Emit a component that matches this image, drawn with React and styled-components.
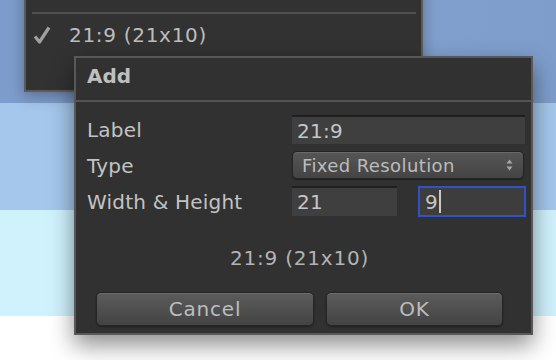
import React from 'react'
import styled, { createGlobalStyle } from 'styled-components'

const GlobalStyle = createGlobalStyle`
    html, body {
        margin : 0;
        padding : 0;
        background : #ffffff;
    }
    body {
        font-family : "DejaVu Sans", "Liberation Sans", sans-serif;
    }
`;

const Desktop = styled.div`
    position : relative;
    width : 556px;
    height : 360px;
    overflow : hidden;
    display : flex;
    flex-direction : column;
`;

const Band = styled.div`
    height : ${({h}) => h}px;
    flex : ${({fill}) => fill ? '1' : 'none'};
    background : ${({bg}) => bg};
`;

const Menu = styled.div`
    position : absolute;
    left : 24px;
    top : -20px;
    width : 399px;
    height : 112px;
    box-sizing : border-box;
    background : #323232;
    border : 2px solid #5b5b5b;
    box-shadow : 0 4px 14px rgba(0,0,0,0.3);
    display : flex;
    flex-direction : column;
`;

const MenuSeparator = styled.div`
    margin : 30px 5px 0 6px;
    height : 2px;
    background : #505050;
`;

const MenuItem = styled.div`
    display : flex;
    align-items : center;
    margin-top : 9px;
    height : 24px;
    padding-left : 7px;
    font-size : 20px;
    line-height : 24px;
    letter-spacing : 0.7px;
    color : #bdbdbd;
`;

const Check = styled.svg`
    width : 18px;
    height : 18px;
    margin-right : 18px;
    flex : none;
`;

const Dialog = styled.div`
    position : absolute;
    left : 74px;
    top : 56px;
    width : 459px;
    height : 279px;
    box-sizing : border-box;
    background : #313131;
    border : 2px solid #585858;
    box-shadow : 0 10px 22px rgba(0,0,0,0.45);
    display : flex;
    flex-direction : column;
`;

const TitleBar = styled.div`
    height : 44px;
    box-sizing : border-box;
    padding : 6px 0 0 11px;
    border-bottom : 2px solid #545454;
    font-size : 20px;
    line-height : 24px;
    font-weight : bold;
    color : #bfbfbf;
`;

const Form = styled.div`
    display : grid;
    grid-template-columns : 205px 1fr;
    row-gap : 7px;
    align-items : center;
    padding : 13px 6px 0 11px;
`;

const FieldLabel = styled.div`
    font-size : 20px;
    line-height : 24px;
    padding-top : 1px;
    letter-spacing : 0.2px;
    color : #c3c3c3;
`;

const TextField = styled.div`
    height : ${({h}) => h || 29}px;
    box-sizing : border-box;
    background : #3f3f3f;
    border-top : 2px solid #1f1f1f;
    padding-left : 5px;
    display : flex;
    align-items : center;
    font-size : 20px;
    letter-spacing : 0.3px;
    color : #c6c6c6;
`;

const FocusField = styled(TextField)`
    border : 2px solid #2f53c6;
    background : #3d3d3d;
    padding-left : 5px;
    margin-right : -1px;
`;

const Caret = styled.span`
    display : inline-block;
    width : 2px;
    height : 23px;
    margin-left : 1px;
    background : #c8c8c8;
`;

const Select = styled.div`
    height : 28px;
    box-sizing : border-box;
    border : 1px solid #242424;
    border-radius : 5px;
    background : linear-gradient(#565656, #444444);
    box-shadow : inset 0 1px 0 rgba(255,255,255,0.12), 0 1px 1px rgba(0,0,0,0.4);
    display : flex;
    align-items : center;
    justify-content : space-between;
    padding : 0 10px 0 9px;
    margin-right : 1px;
    font-size : 18px;
    letter-spacing : 0.4px;
    color : #bcbcbc;
`;

const Arrows = styled.svg`
    width : 7px;
    height : 12px;
`;

const PairRow = styled.div`
    display : grid;
    grid-template-columns : 105px 1fr;
    column-gap : 21px;
`;

const Preview = styled.div`
    margin-top : 29px;
    padding-right : 8px;
    text-align : center;
    font-size : 20px;
    line-height : 24px;
    letter-spacing : 0.8px;
    color : #b3b3b3;
`;

const ButtonRow = styled.div`
    display : flex;
    gap : 12px;
    margin-top : 22px;
    padding-left : 20px;
`;

const Button = styled.button`
    width : ${({w}) => w}px;
    height : 34px;
    box-sizing : border-box;
    border : 1px solid #262626;
    border-radius : 5px;
    background : linear-gradient(#5c5c5c, #434343);
    box-shadow : inset 0 1px 0 rgba(255,255,255,0.1), 0 1px 2px rgba(0,0,0,0.4);
    font-family : "DejaVu Sans", "Liberation Sans", sans-serif;
    font-size : 20px;
    letter-spacing : 0.8px;
    color : #bdbdbd;
    padding : 0;
`;

const App = () => {
    return (
        <>
            <GlobalStyle/>
            <Desktop>
                <Band h={103} bg="linear-gradient(90deg, #7d9ccb, #84a3cf 40%, #7e9dcb)"/>
                <Band h={107} bg="#a5c7eb"/>
                <Band h={106} bg="#d0f2fd"/>
                <Band fill bg="#ffffff"/>

                <Menu>
                    <MenuSeparator/>
                    <MenuItem>
                        <Check viewBox="0 0 18 18">
                            <path d="M2 10.5 L6.5 16 L16 1.5" fill="none" stroke="#a0a0a0" strokeWidth="3.2" strokeLinejoin="round"/>
                        </Check>
                        21:9 (21x10)
                    </MenuItem>
                </Menu>

                <Dialog>
                    <TitleBar>Add</TitleBar>
                    <Form>
                        <FieldLabel>Label</FieldLabel>
                        <TextField>21:9</TextField>
                        <FieldLabel>Type</FieldLabel>
                        <Select>
                            Fixed Resolution
                            <Arrows viewBox="0 0 7 12">
                                <path d="M3.5 0.5 L6.5 4.5 L0.5 4.5 Z" fill="#a8a8a8"/>
                                <path d="M0.5 7.5 L6.5 7.5 L3.5 11.5 Z" fill="#a8a8a8"/>
                            </Arrows>
                        </Select>
                        <FieldLabel>Width &amp; Height</FieldLabel>
                        <PairRow>
                            <TextField h={30}>21</TextField>
                            <FocusField h={31}>9<Caret/></FocusField>
                        </PairRow>
                    </Form>
                    <Preview>21:9 (21x10)</Preview>
                    <ButtonRow>
                        <Button w={218}>Cancel</Button>
                        <Button w={177}>OK</Button>
                    </ButtonRow>
                </Dialog>
            </Desktop>
        </>
    )
}

export default App
